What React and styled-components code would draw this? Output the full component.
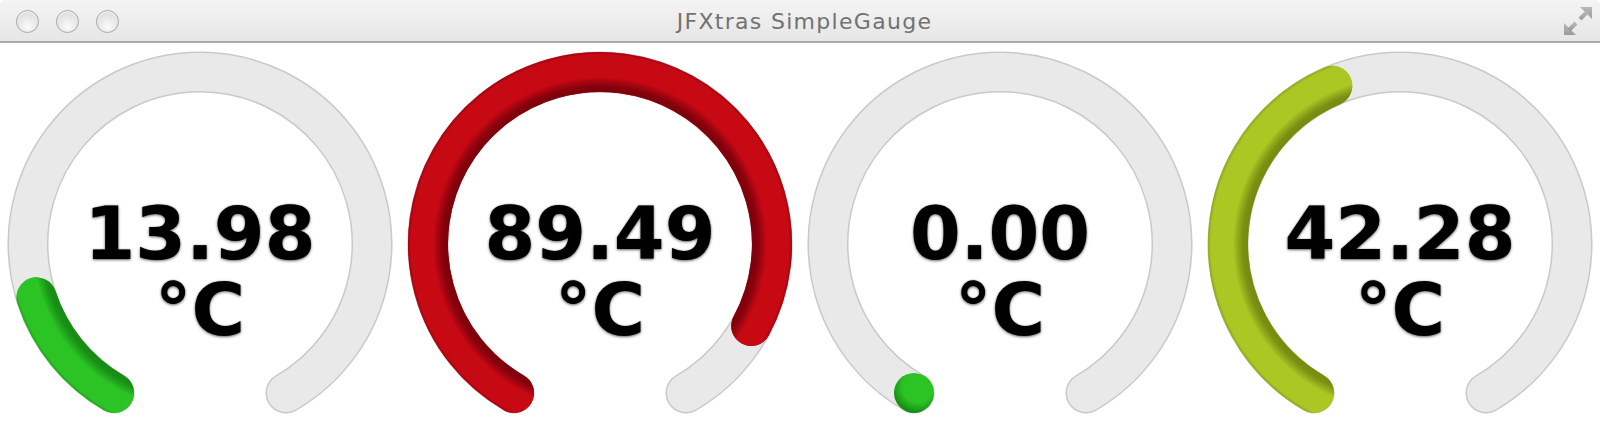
import React from "react";
import styled, { createGlobalStyle } from "styled-components";

const Global = createGlobalStyle`
  html, body { margin: 0; padding: 0; background: #ffffff; }
  body { width: 1600px; height: 444px; overflow: hidden; }
`;

const Window = styled.div`
  width: 1600px;
  height: 444px;
  display: flex;
  flex-direction: column;
  background: #ffffff;
  border-radius: 5px 5px 0 0;
  overflow: hidden;
`;

const TitleBar = styled.div`
  height: 41px;
  flex: none;
  display: grid;
  grid-template-columns: 1fr auto 1fr;
  align-items: center;
  padding: 0 7px 0 16px;
  background: linear-gradient(#f4f4f4, #e6e6e6);
  border-bottom: 2px solid #a9a9a9;
`;

const Lights = styled.div`
  display: flex;
  gap: 17px;
  align-items: center;
  padding-top: 2px;
`;

const Light = styled.span`
  width: 23px;
  height: 23px;
  box-sizing: border-box;
  border-radius: 50%;
  border: 1px solid #a7a7a7;
  background: radial-gradient(circle at 50% 75%, #fafafa 0%, #e9e9e9 45%, #d6d6d6 100%);
  box-shadow: inset 0 1px 1px rgba(255, 255, 255, 0.9);
`;

const Title = styled.div`
  font-family: "DejaVu Sans", "Liberation Sans", sans-serif;
  font-size: 22px;
  letter-spacing: 1.3px;
  color: #727272;
  padding-top: 1px;
`;

const RightTools = styled.div`
  display: flex;
  justify-content: flex-end;
  align-items: center;
`;

const Content = styled.div`
  flex: 1;
  display: grid;
  grid-template-columns: repeat(4, 400px);
  padding-top: 1px;
`;

const GaugeCell = styled.div`
  width: 400px;
  height: 400px;
  display: grid;
  justify-items: center;
  align-items: start;
  & > * { grid-area: 1 / 1; }
`;

const GaugeSvg = styled.svg`
  width: 400px;
  height: 400px;
  display: block;
`;

const Readout = styled.div`
  margin-top: 152px;
  display: flex;
  flex-direction: column;
  align-items: center;
  font-family: "DejaVu Sans", Verdana, sans-serif;
  font-weight: bold;
  font-size: 73px;
  color: #000000;
  text-shadow: 0 1px 3px rgba(0, 0, 0, 0.6), 0 0 1px rgba(0, 0, 0, 0.5);
`;

const TextLine = styled.span`
  display: block;
  height: 76px;
  line-height: 76px;
`;

const CX = 200;
const CY = 200;
const R = 172;

const pt = (deg) => {
  const a = (deg * Math.PI) / 180;
  return [CX - R * Math.sin(a), CY + R * Math.cos(a)];
};

const arcPath = (from, to) => {
  const [x1, y1] = pt(from);
  const [x2, y2] = pt(to);
  const large = to - from > 180 ? 1 : 0;
  return `M ${x1.toFixed(2)} ${y1.toFixed(2)} A ${R} ${R} 0 ${large} 1 ${x2.toFixed(2)} ${y2.toFixed(2)}`;
};

const ResizeIcon = () => (
  <svg width="30" height="30" viewBox="0 0 30 30">
    <defs>
      <linearGradient id="rz" x1="0" y1="0" x2="0" y2="1">
        <stop offset="0" stopColor="#b9b9b9" />
        <stop offset="1" stopColor="#9c9c9c" />
      </linearGradient>
    </defs>
    <polygon points="29,1 29,13 17,1" fill="url(#rz)" />
    <line x1="24" y1="6" x2="17" y2="13" stroke="url(#rz)" strokeWidth="4" />
    <polygon points="1,29 1,17 13,29" fill="url(#rz)" />
    <line x1="6" y1="24" x2="13" y2="17" stroke="url(#rz)" strokeWidth="4" />
  </svg>
);

const Gauge = ({ id, value, color, dark }) => {
  const end = 30 + 3 * value;
  const [sx, sy] = pt(30);
  return (
    <GaugeCell>
      <GaugeSvg viewBox="0 0 400 400">
        <defs>
          <radialGradient id={`g${id}`} gradientUnits="userSpaceOnUse" cx={CX} cy={CY} r="193">
            <stop offset="0.785" stopColor={dark} />
            <stop offset="0.815" stopColor={dark} stopOpacity="0.9" />
            <stop offset="0.865" stopColor={color} />
            <stop offset="0.98" stopColor={color} />
            <stop offset="1" stopColor={dark} stopOpacity="0.5" />
          </radialGradient>
          <radialGradient id={`d${id}`} cx="0.6" cy="0.35" r="0.65">
            <stop offset="0.6" stopColor={color} />
            <stop offset="1" stopColor={dark} />
          </radialGradient>
        </defs>
        <path d={arcPath(30, 330)} fill="none" stroke="#c9c9c9" strokeWidth="41" strokeLinecap="round" />
        <path d={arcPath(30, 330)} fill="none" stroke="#e9e9e9" strokeWidth="38" strokeLinecap="round" />
        {value > 0.5 ? (
          <>
            <path d={arcPath(30, end)} fill="none" stroke={color} strokeWidth="40" strokeLinecap="round" />
            <path d={arcPath(30, end)} fill="none" stroke={`url(#g${id})`} strokeWidth="40" strokeLinecap="round" />
          </>
        ) : (
          <circle cx={sx} cy={sy} r="20" fill={`url(#d${id})`} />
        )}
      </GaugeSvg>
      <Readout>
        <TextLine>{value.toFixed(2)}</TextLine>
        <TextLine>°C</TextLine>
      </Readout>
    </GaugeCell>
  );
};

const gauges = [
  { id: 1, value: 13.98, color: "#2bc424", dark: "#178a14" },
  { id: 2, value: 89.49, color: "#c70914", dark: "#7c000b" },
  { id: 3, value: 0.0, color: "#2bc424", dark: "#178a14" },
  { id: 4, value: 42.28, color: "#aac724", dark: "#748a10" },
];

export default function App() {
  return (
    <>
      <Global />
      <Window>
        <TitleBar>
          <Lights>
            <Light />
            <Light />
            <Light />
          </Lights>
          <Title>JFXtras SimpleGauge</Title>
          <RightTools>
            <ResizeIcon />
          </RightTools>
        </TitleBar>
        <Content>
          {gauges.map((g) => (
            <Gauge key={g.id} {...g} />
          ))}
        </Content>
      </Window>
    </>
  );
}
